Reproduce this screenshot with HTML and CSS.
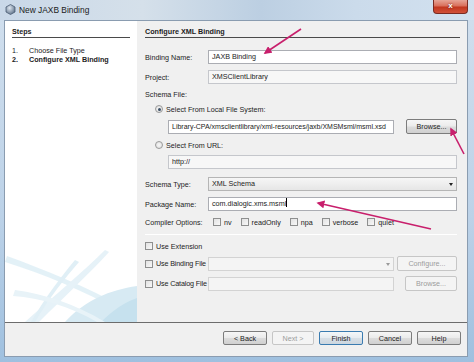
FILE: index.html
```html
<!DOCTYPE html>
<html>
<head>
<meta charset="utf-8">
<link rel="stylesheet" href="styles.css">
</head>
<body>
<div class="frame">
  <div class="titlebar">
    <svg class="appicon" width="11" height="11" viewBox="0 0 11 11">
      <defs><radialGradient id="g" cx="0.4" cy="0.35" r="0.7"><stop offset="0" stop-color="#dfe8f2"/><stop offset="1" stop-color="#5b6f86"/></radialGradient></defs>
      <path d="M5.5 0.5 L10 3 L10 8 L5.5 10.5 L1 8 L1 3 Z" fill="url(#g)" stroke="#4b5d73" stroke-width="0.8"/>
    </svg>
    <span class="title">New JAXB Binding</span>
    <div class="close">x</div>
  </div>
  <div class="client">
    <div class="main">
      <aside class="steps">
        <div class="steps-head">Steps</div>
        <ol class="steplist">
          <li><span class="num">1.</span><span>Choose File Type</span></li>
          <li class="current"><span class="num">2.</span><span>Configure XML Binding</span></li>
        </ol>
        <svg class="swoosh" width="132" height="72" viewBox="0 0 132 72">
          <path d="M2 6 C40 20 80 36 120 58 L116 62 C78 40 38 24 0 12 Z" fill="#dcedf5" opacity="0.8"/>
          <path d="M100 0 C80 20 50 45 20 72 L34 72 C60 46 86 22 104 2 Z" fill="#e6f2f8"/>
          <path d="M70 10 C55 28 40 48 26 72 L30 72 C44 48 60 28 74 12 Z" fill="#e0eff6"/>
          <path d="M60 72 C80 50 105 40 132 36 L132 72 Z" fill="#d7eaf3"/>
          <path d="M96 72 C108 60 120 52 132 48 L132 72 Z" fill="#c6e1ee"/>
          <path d="M10 40 C40 44 70 54 100 72 L92 72 C64 56 36 48 8 46 Z" fill="#e8f3f8"/>
        </svg>
      </aside>
      <section class="content">
        <div class="content-head">Configure XML Binding</div>
        <div class="row r-binding"><label class="lbl">Binding Name:</label><div class="field">JAXB Binding</div></div>
        <div class="row r-project"><label class="lbl">Project:</label><div class="field ro">XMSClientLibrary</div></div>
        <div class="line r-schema">Schema File:</div>
        <div class="radio-row r-local"><span class="radio on"></span><span>Select From Local File System:</span></div>
        <div class="row indent r-path"><div class="field path">Library-CPA/xmsclientlibrary/xml-resources/jaxb/XMSMsml/msml.xsd</div><button class="btn browse">Browse...</button></div>
        <div class="radio-row r-url"><span class="radio"></span><span>Select From URL:</span></div>
        <div class="row indent r-http"><div class="field ro">http://</div></div>
        <div class="row r-type"><label class="lbl">Schema Type:</label><div class="field select">XML Schema<span class="caret"></span></div></div>
        <div class="row r-pkg"><label class="lbl">Package Name:</label><div class="field">com.dialogic.xms.msml<span class="cursor"></span></div></div>
        <div class="row r-opts"><label class="lbl">Compiler Options:</label>
          <div class="opts">
            <span class="opt"><span class="cb"></span>nv</span>
            <span class="opt"><span class="cb"></span>readOnly</span>
            <span class="opt"><span class="cb"></span>npa</span>
            <span class="opt"><span class="cb"></span>verbose</span>
            <span class="opt"><span class="cb"></span>quiet</span>
          </div>
        </div>
        <div class="sep"></div>
        <div class="row r-ext"><span class="opt"><span class="cb"></span>Use Extension</span></div>
        <div class="row r-bfile"><span class="opt lbl tight"><span class="cb"></span>Use Binding File</span><div class="field dis select small"><span class="caret light"></span></div><button class="btn dis configure">Configure...</button></div>
        <div class="row r-cfile"><span class="opt lbl tight"><span class="cb"></span>Use Catalog File</span><div class="field dis small"></div><button class="btn dis browse2">Browse...</button></div>
      </section>
    </div>
    <div class="footer">
      <button class="btn fb">&lt; Back</button>
      <button class="btn fb dis next">Next &gt;</button>
      <button class="btn fb finish">Finish</button>
      <button class="btn fb">Cancel</button>
      <button class="btn fb">Help</button>
    </div>
  </div>
</div>
<svg class="arrows" width="474" height="362" viewBox="0 0 474 362">
  <defs>
    <marker id="ah" viewBox="0 0 10 10" refX="8" refY="5" markerWidth="5" markerHeight="5" orient="auto">
      <path d="M0 0 L10 5 L0 10 Z" fill="#c81f6c"/>
    </marker>
  </defs>
  <line x1="301" y1="29" x2="265" y2="53" stroke="#c81f6c" stroke-width="1.6" marker-end="url(#ah)"/>
  <line x1="464" y1="154" x2="451" y2="129" stroke="#c81f6c" stroke-width="1.6" marker-end="url(#ah)"/>
  <line x1="431" y1="229" x2="318" y2="203" stroke="#c81f6c" stroke-width="1.6" marker-end="url(#ah)"/>
</svg>
</body>
</html>
```
FILE: styles.css
```css
* { box-sizing: border-box; }
html, body { margin: 0; padding: 0; }
body {
  width: 474px; height: 362px; overflow: hidden; position: relative;
  font-family: "Liberation Sans", Arial, sans-serif; font-size: 7.2px; color: #1c1c1c;
}
.frame {
  width: 474px; height: 362px;
  display: flex; flex-direction: column;
  padding: 0 6px 5px 4px;
  background: linear-gradient(180deg, #c5d6e8 0%, #cfdeed 6%, #bcd2e8 60%, #9fc0df 100%);
}
.titlebar {
  height: 20px; flex: none; display: flex; align-items: center; position: relative;
  margin: 0 -6px 0 -4px; padding-left: 5px;
  background: linear-gradient(90deg, #c9d8e8 0%, #d5e0ea 30%, #bccfe2 55%, #cbdbeb 75%, #d2e1ef 100%);
}
.appicon { display: block; margin-top: -1px; }
.title { font-size: 8.4px; margin-left: 3px; color: #1a1a1a; margin-top: -1px; }
.close {
  position: absolute; right: 6px; top: 0; width: 35px; height: 14px;
  border: 1px solid #7a2b22; border-top: none; border-radius: 0 0 4px 4px;
  background: linear-gradient(180deg, #e6a496 0%, #d9705c 45%, #c2371f 55%, #d1523a 100%);
  color: #fff; font-weight: bold; font-size: 8px; text-align: center; line-height: 12px;
  text-shadow: 0 0 2px #5a0f06;
}
.client {
  flex: 1; display: flex; flex-direction: column;
  border: 1px solid #8a9cb0; background: #f0f0f0;
}
.main { height: 301px; display: flex; flex: none; }
.steps {
  width: 132px; background: #fff; display: flex; flex-direction: column;
  padding: 6px 7px 0 7px;
}
.steps-head {
  font-weight: bold; line-height: 10px; border-bottom: 1px solid #4a4a4a; padding-bottom: 0;
}
.steplist { list-style: none; margin: 8px 0 0 0; padding: 0; }
.steplist li { display: flex; line-height: 9px; }
.steplist .num { width: 17px; }
.steplist li.current { font-weight: bold; }
.swoosh { margin: auto -7px 0 -7px; display: block; }
.content { flex: 1; padding: 6px 10px 0 8px; display: flex; flex-direction: column; }
.content-head {
  font-weight: bold; line-height: 10px; border-bottom: 1px solid #4a4a4a; margin-right: -3px;
}
.row { display: flex; align-items: center; height: 14px; flex: none; }
.lbl { width: 63px; flex: none; white-space: nowrap; }
.tight { letter-spacing: -0.15px; }
.field {
  flex: 1; height: 14px; border: 1px solid #abadb3; background: #fff;
  padding: 0 3px; line-height: 12px; white-space: nowrap; overflow: hidden; position: relative;
  color: #222;
}
.field.ro { background: #f7f7f7; border-color: #c5c7cc; }
.field.dis { background: #f4f4f4; border-color: #d3d3d3; }
.field.select { background: linear-gradient(#f6f6f6, #e6e6e6); border-color: #b5b5b5; }
.field.dis.select { background: #f4f4f4; border-color: #d3d3d3; }
.caret {
  position: absolute; right: 3px; top: 5px; width: 0; height: 0;
  border-left: 2.5px solid transparent; border-right: 2.5px solid transparent; border-top: 3px solid #222;
}
.caret.light { border-top-color: #9a9a9a; }
.cursor { display: inline-block; width: 1px; height: 9px; background: #000; vertical-align: -1px; }
.line { line-height: 10px; height: 10px; flex: none; }
.radio-row { display: flex; align-items: center; height: 10px; margin-left: 10px; flex: none; }
.radio {
  width: 8px; height: 8px; border-radius: 50%; border: 1px solid #9a9a9a;
  background: radial-gradient(circle, #f7f7f7 0%, #dcdcdc 100%); margin-right: 3px; position: relative;
}
.radio.on::after {
  content: ""; position: absolute; left: 1.5px; top: 1.5px; width: 3px; height: 3px; border-radius: 50%;
  background: #3b4f66;
}
.indent { margin-left: 23px; }
.btn {
  font-family: inherit; font-size: 7.2px; color: #1c1c1c; padding: 0;
  height: 15px; border: 1px solid #7c7c7c; border-radius: 2px;
  background: linear-gradient(180deg, #f6f6f6 0%, #ebebeb 48%, #dcdcdc 52%, #d0d0d0 100%);
}
.btn.dis { color: #9c9c9c; border-color: #c6c6c6; background: #f4f4f4; }
.r-binding { margin-top: 12px; }
.r-project { margin-top: 6px; }
.r-schema { margin-top: 6px; }
.r-local { margin-top: 4px; }
.r-path { margin-top: 5px; height: 15px; }
.field.path { flex: none; width: 226px; height: 14px; font-size: 7px; }
.browse { width: 51px; margin-left: auto; }
.r-url { margin-top: 6px; }
.r-http { margin-top: 5px; }
.r-type { margin-top: 8px; }
.r-pkg { margin-top: 6px; }
.r-opts { margin-top: 6px; height: 10px; }
.opts { display: flex; margin-left: 5px; gap: 9px; }
.opt { display: flex; align-items: center; }
.cb {
  width: 8px; height: 8px; border: 1px solid #8e8f8f; margin-right: 3px;
  background: linear-gradient(135deg, #e2e2e2 0%, #f8f8f8 100%); flex: none;
}
.sep { height: 1px; background: #a8a8a8; margin-top: 7px; flex: none; border-bottom: 1px solid #fff; }
.r-ext { margin-top: 6px; height: 10px; }
.r-bfile { margin-top: 5px; height: 15px; }
.r-cfile { margin-top: 5px; height: 15px; }
.field.small { flex: none; width: 186px; height: 14px; }
.configure { width: 60px; margin-left: auto; }
.browse2 { width: 52px; margin-left: auto; }
.footer {
  flex: 1; border-top: 1px solid #6c6c6c; display: flex; align-items: center; justify-content: flex-end;
  padding: 0 6px 3px 0; gap: 5px;
}
.fb { width: 44px; height: 14px; }
.next { width: 42px; }
.finish { border-color: #3a7bb0; background: linear-gradient(180deg, #f4f7f9 0%, #e6ecf1 48%, #d7dfe6 52%, #ccd6df 100%); }
.arrows { position: absolute; left: 0; top: 0; pointer-events: none; }
```
